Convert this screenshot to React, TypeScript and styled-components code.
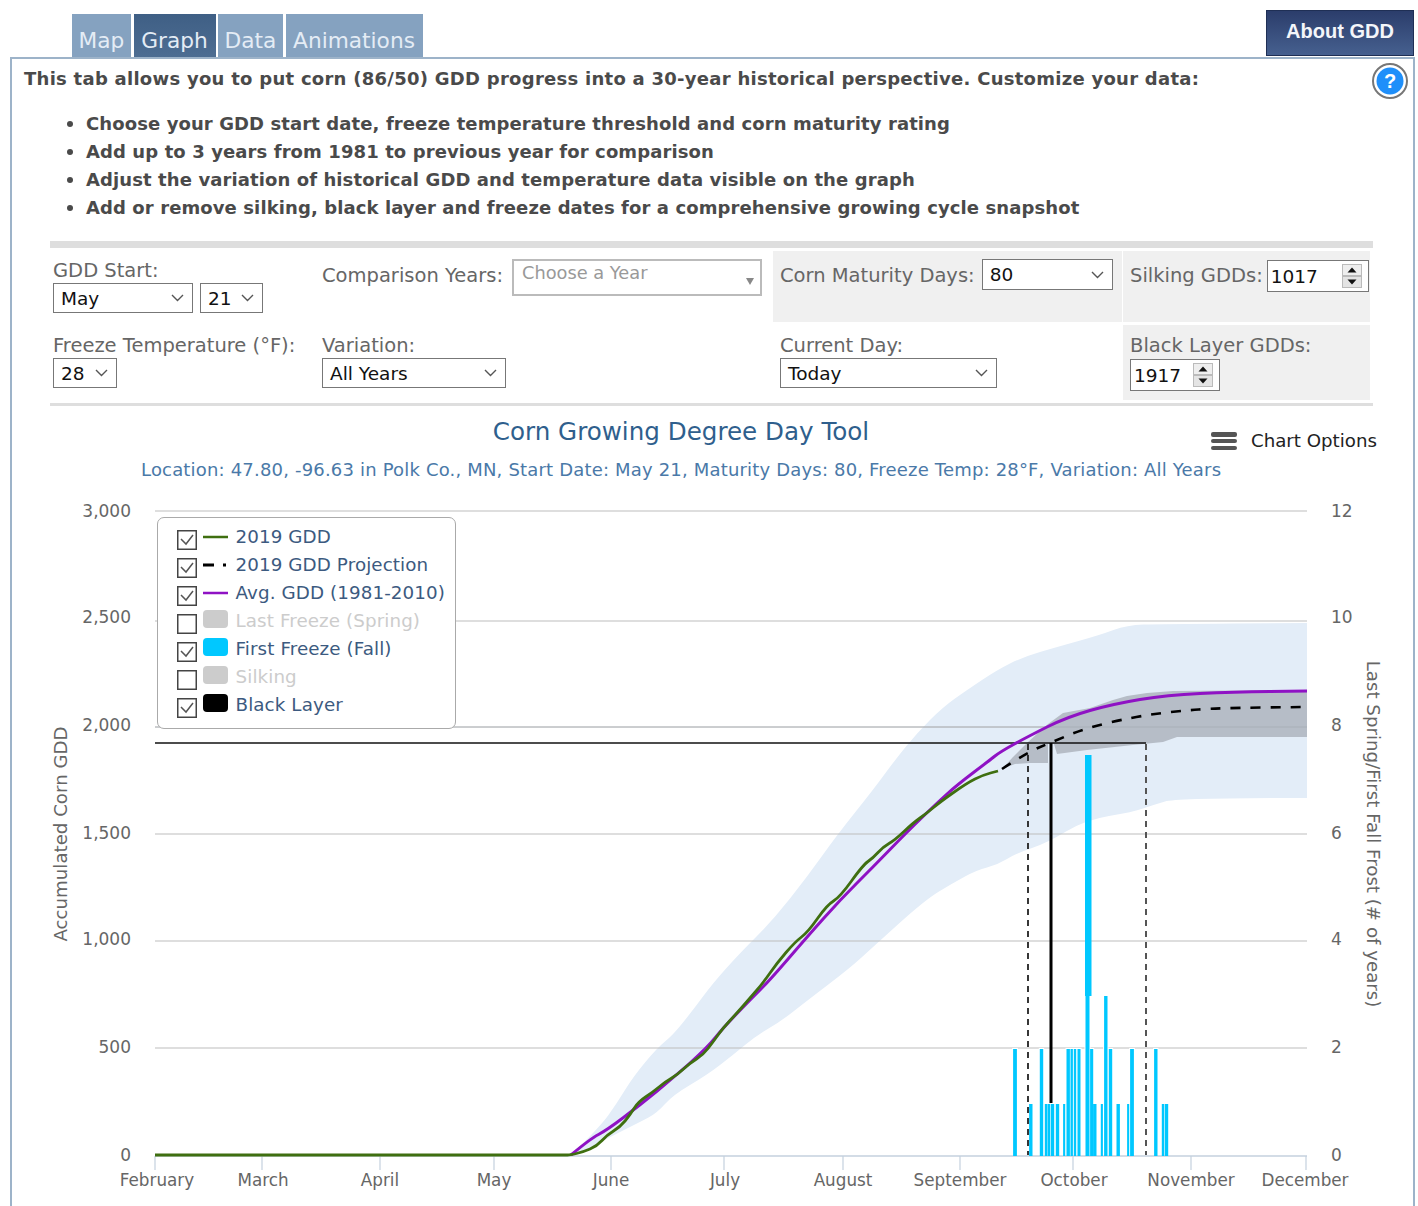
import React from "react";
import styled, { createGlobalStyle } from "styled-components";

const Global = createGlobalStyle`
  html, body { margin: 0; padding: 0; background: #fff; }
  body { width: 1418px; height: 1206px; overflow: hidden; font-family: "DejaVu Sans", Verdana, sans-serif; }
`;
const Page = styled.div`
  width: 1418px;
  height: 1206px;
  overflow: hidden;
`;
const TopBar = styled.div`
  height: 57px;
  padding: 10px 4px 0 72px;
  box-sizing: border-box;
  display: flex;
  justify-content: space-between;
  align-items: flex-end;
`;
const Tabs = styled.div`
  display: flex;
  gap: 2.5px;
`;
const Tab = styled.div<{ $active?: boolean; $w: number }>`
  width: ${(p) => p.$w}px;
  height: 43px;
  box-sizing: border-box;
  padding-top: 13px;
  text-align: center;
  font-size: 21.7px;
  line-height: 28px;
  color: #e4ecf5;
  background: ${(p) => (p.$active ? "linear-gradient(#3f5f85, #4d6d92)" : "#85a2c0")};
`;
const AboutButton = styled.div`
  width: 148px;
  height: 46px;
  margin-bottom: 1px;
  box-sizing: border-box;
  border: 1px solid #1f2f55;
  background: linear-gradient(#2b3d6b, #46608f);
  color: #f4f6fa;
  font: bold 20px/41px "Liberation Sans", Arial, sans-serif;
  text-align: center;
`;
const Panel = styled.div`
  position: relative;
  margin-left: 10px;
  width: 1405px;
  height: 1149px;
  box-sizing: border-box;
  border: 2px solid #9db3c9;
  border-bottom: 0;
  padding: 0 0 0 12px;
`;
const HelpIcon = styled.svg`
  position: absolute;
  top: 3px;
  right: 4px;
`;
const Intro = styled.div`
  font-size: 18px;
  font-weight: bold;
  letter-spacing: 0.27px;
  line-height: 28px;
  height: 28px;
  margin-top: 6px;
  color: #4a4a4a;
  white-space: nowrap;
`;
const BulletList = styled.ul`
  margin: 16px 0 0;
  padding: 0 0 0 62px;
  font-size: 18px;
  font-weight: bold;
  letter-spacing: 0.1px;
  line-height: 28px;
  color: #4a4a4a;
  list-style: disc;
  li { height: 28px; }
  li::marker { font-size: 19px; }
`;
const Rule = styled.div<{ $h: number; $top: number }>`
  width: 1323px;
  height: ${(p) => p.$h}px;
  margin: ${(p) => p.$top}px 0 0 26px;
  background: #dedede;
`;
const ControlGrid = styled.div`
  width: 1320px;
  margin: 3px 0 0 26px;
  display: grid;
  grid-template-columns: 268px 453px 349px 247px;
  column-gap: 1px;
  grid-template-rows: 71px 75px;
  row-gap: 3px;
`;
const Cell = styled.div<{ $shade?: boolean; $inset?: boolean; $top?: number }>`
  box-sizing: border-box;
  padding: ${(p) => p.$top ?? 8}px 0 0 ${(p) => (p.$inset ? 7 : 3)}px;
  background: ${(p) => (p.$shade ? "#f0f0f0" : "transparent")};
`;
const InlineCell = styled(Cell)<{ $gap?: number }>`
  display: flex;
  align-items: flex-start;
  gap: ${(p) => p.$gap ?? 7}px;
`;
const FieldLabel = styled.div`
  font-size: 19.5px;
  line-height: 24px;
  color: #666;
  white-space: nowrap;
`;
const InlineLabel = styled(FieldLabel)`
  margin-top: 5px;
`;
const Row = styled.div`
  display: flex;
  gap: 7px;
`;
const SelectBox = styled.div<{ $w: number; $h?: number }>`
  width: ${(p) => p.$w}px;
  height: ${(p) => p.$h ?? 30}px;
  box-sizing: border-box;
  border: 1.5px solid #777;
  background: #fff;
  display: flex;
  align-items: center;
  justify-content: space-between;
  padding: 0 8px 0 7px;
  font-size: 18.5px;
  color: #111;
`;
const Multi = styled.div`
  width: 250px;
  height: 37px;
  flex: none;
  box-sizing: border-box;
  border: 2px solid #bbb;
  background: #fff;
  display: flex;
  justify-content: space-between;
  padding: 0 6px 0 8px;
  font-size: 17.8px;
  line-height: 24px;
  color: #999;
`;
const Caret = styled.span`
  margin-top: 17px;
  width: 0;
  height: 0;
  border-left: 4px solid transparent;
  border-right: 4px solid transparent;
  border-top: 7px solid #888;
`;
const SpinInput = styled.div<{ $w: number }>`
  width: ${(p) => p.$w}px;
  height: 32px;
  flex: none;
  margin-top: 1px;
  box-sizing: border-box;
  border: 1.5px solid #777;
  background: #fff;
  display: flex;
  align-items: center;
  justify-content: space-between;
  padding: 0 6px 0 3px;
  font-size: 18.5px;
  color: #111;
`;
const Spin = styled.svg`
  flex: none;
`;
const ChartBlock = styled.div`
  position: relative;
  padding-top: 10px;
`;
const ChartTitle = styled.div`
  width: 1314px;
  text-align: center;
  font-size: 24.6px;
  line-height: 32px;
  color: #2f5f8d;
`;
const ChartSub = styled.div`
  margin: 10px 0 0 117px;
  font-size: 18px;
  letter-spacing: 0.18px;
  line-height: 24px;
  color: #4a79a8;
  white-space: nowrap;
`;
const ChartOptions = styled.div`
  position: absolute;
  top: 23px;
  left: 1187px;
  display: flex;
  align-items: center;
  gap: 14px;
  font: 18.2px/24px "DejaVu Sans", sans-serif;
  color: #222;
  white-space: nowrap;
`;
const Burger = styled.div`
  width: 26px;
  height: 18px;
  display: flex;
  flex-direction: column;
  justify-content: space-between;
  i { display: block; height: 4.5px; border-radius: 2px; background: #555; }
`;
const Plot = styled.svg`
  display: block;
  margin: 8px 0 0 0;
`;
const Legend = styled.div`
  position: absolute;
  left: 133px;
  top: 111px;
  width: 299px;
  height: 212px;
  box-sizing: border-box;
  border: 1.5px solid #aaa;
  border-radius: 7px;
  background: #fff;
  padding: 4.5px 0 0 18.5px;
`;
const LegendRow = styled.div<{ $off?: boolean }>`
  height: 28px;
  display: flex;
  align-items: center;
  font-size: 18.3px;
  letter-spacing: 0.1px;
  color: ${(p) => (p.$off ? "#ccc" : "#3c5a80")};
  white-space: nowrap;
`;
const Check = styled.svg`
  flex: none;
  margin: 6px 6px 0 0;
`;
const SwatchBox = styled.span<{ $c: string }>`
  flex: none;
  width: 25px;
  height: 18px;
  margin: -4px 8px 0 0;
  border-radius: 4px;
  background: ${(p) => p.$c};
`;
const SwatchLine = styled.svg`
  flex: none;
  margin-right: 8px;
`;

const Chevron = () => (
  <svg width="13" height="8" viewBox="0 0 13 8"><path d="M1 1l5.5 5.5L12 1" fill="none" stroke="#555" strokeWidth="1.4" /></svg>
);
const Spinner = () => (
  <Spin width="20" height="24" viewBox="0 0 20 24">
    <rect x="0.5" y="0.5" width="19" height="11" fill="#eee" stroke="#bbb" />
    <rect x="0.5" y="12.5" width="19" height="11" fill="#e4e4e4" stroke="#bbb" />
    <path d="M5.5 8.5l4.5-5 4.5 5z" fill="#111" />
    <path d="M5.5 15.5l4.5 5 4.5-5z" fill="#111" />
  </Spin>
);

const smooth = (p: number[][], move = true) => {
  let d = `${move ? "M" : "L"}${p[0][0]} ${p[0][1]}`;
  for (let i = 1; i < p.length - 1; i++) {
    const mx = (p[i][0] + p[i + 1][0]) / 2;
    const my = (p[i][1] + p[i + 1][1]) / 2;
    d += ` Q${p[i][0]} ${p[i][1]} ${mx} ${my}`;
  }
  const l = p[p.length - 1];
  return d + ` L${l[0]} ${l[1]}`;
};
const poly = (p: number[][]) => p.map((q, i) => `${i ? "L" : "M"}${q[0]} ${q[1]}`).join(" ") + " Z";

const purple = [[571,1155],[590,1139],[607,1130],[640,1105],[673,1078],[707,1048],[723,1028],[750,1000],[770,980],[807,937],[840,900],[873,867],[907,832],[937,803],[957,785],[990,760],[1000,752],[1027,737],[1067,717],[1113,704],[1167,695],[1233,692],[1307,691]];
const green = [[155,1155],[565,1155],[570,1155],[583,1152],[597,1146],[607,1135],[620,1127],[630,1115],[638,1102],[653,1092],[665,1082],[677,1075],[690,1063],[703,1055],[713,1042],[723,1028],[737,1013],[750,998],[763,983],[777,963],[795,942],[808,932],[827,905],[840,897],[863,865],[873,858],[883,847],[895,840],[913,823],[927,813],[940,802],[967,783],[983,775],[998,771]];
const proj = [[1002,769],[1028,752],[1050,743],[1083,729],[1133,717],[1177,711],[1220,708],[1307,707]];
const bandUp = [[571,1155],[600,1127],[617,1103],[633,1077],[657,1048],[673,1035],[693,1010],[713,983],[740,953],[773,920],[807,877],[837,835],[873,790],[895,760],[917,733],[943,707],[967,690],[997,670],[1023,657],[1057,647],[1100,635],[1127,625],[1160,624],[1307,623]];
const bandLow = [[1307,798],[1177,798],[1153,805],[1133,812],[1085,820],[1047,843],[1017,853],[997,865],[977,870],[953,883],[925,900],[873,947],[850,968],[808,1000],[780,1022],[757,1035],[733,1055],[707,1075],[673,1095],[657,1113],[640,1122],[610,1137],[590,1148],[571,1155]];
const darkA = [[1002,769],[1013,757],[1028,742],[1048,724],[1048,763],[1030,763],[1015,764]];
const darkB = [[1048,724],[1063,713],[1090,708],[1113,700],[1127,696],[1147,693],[1173,691],[1307,690],[1307,737],[1177,737],[1163,742],[1133,745],[1087,750],[1057,754],[1054,744],[1048,744]];

const bars: [number, number, number][] = [
  [1013.3,1016.7,2],[1029.3,1032.3,1],[1040,1043,2],[1045,1047.3,1],[1048,1050,1],[1051,1054,1],[1056,1059,1],[1063.3,1065,1],[1066.7,1069.7,2],[1070.7,1072.7,2],[1074,1076,2],[1077.7,1080.3,2],[1085.7,1089.3,3],[1090.3,1093,2],[1093.3,1096.3,1],[1101,1102.7,1],[1104.3,1107.3,3],[1109,1112,2],[1116.7,1119.7,1],[1127.3,1129,1],[1130.3,1133.7,2],[1154.3,1157.3,2],[1162,1164,1],[1165,1168,1],
];
const barTop = [0, 1104, 1049, 996];

const grid = [511, 621, 727, 834, 941, 1048];
const yLabels: [string, number, string][] = [["3,000",517,"12"],["2,500",623,"10"],["2,000",731,"8"],["1,500",839,"6"],["1,000",945,"4"],["500",1053,"2"],["0",1161,"0"]];
const ticks = [155, 262, 380, 494, 611, 724, 843, 960, 1073, 1191, 1306];
const months: [string, number][] = [["February",157],["March",263],["April",380],["May",494],["June",611],["July",725],["August",843],["September",960],["October",1074],["November",1191],["December",1305]];

const legendRows = [
  { label: "2019 GDD", kind: "line", c: "#3f6f10" },
  { label: "2019 GDD Projection", kind: "dash", c: "#000" },
  { label: "Avg. GDD (1981-2010)", kind: "line", c: "#8f12c4" },
  { label: "Last Freeze (Spring)", kind: "box", c: "#ccc", off: true },
  { label: "First Freeze (Fall)", kind: "box", c: "#00c8ff" },
  { label: "Silking", kind: "box", c: "#ccc", off: true },
  { label: "Black Layer", kind: "box", c: "#000" },
];

export default function App() {
  return (
    <Page>
      <Global />
      <TopBar>
        <Tabs>
          <Tab $w={59}>Map</Tab>
          <Tab $w={82} $active>Graph</Tab>
          <Tab $w={65}>Data</Tab>
          <Tab $w={137}>Animations</Tab>
        </Tabs>
        <AboutButton>About GDD</AboutButton>
      </TopBar>
      <Panel>
        <HelpIcon width="38" height="38" viewBox="0 0 38 38">
          <circle cx="19" cy="19" r="17" fill="#fff" stroke="#777" strokeWidth="2" />
          <circle cx="19" cy="19" r="13.5" fill="#1f8ffa" />
          <text x="19" y="26" textAnchor="middle" fontFamily="Liberation Sans" fontWeight="bold" fontSize="20" fill="#fff">?</text>
        </HelpIcon>
        <Intro>This tab allows you to put corn (86/50) GDD progress into a 30-year historical perspective. Customize your data:</Intro>
        <BulletList>
          <li>Choose your GDD start date, freeze temperature threshold and corn maturity rating</li>
          <li>Add up to 3 years from 1981 to previous year for comparison</li>
          <li>Adjust the variation of historical GDD and temperature data visible on the graph</li>
          <li>Add or remove silking, black layer and freeze dates for a comprehensive growing cycle snapshot</li>
        </BulletList>
        <Rule $h={7} $top={20} />
        <ControlGrid>
          <Cell>
            <FieldLabel>GDD Start:</FieldLabel>
            <Row>
              <SelectBox $w={140}>May<Chevron /></SelectBox>
              <SelectBox $w={63}>21<Chevron /></SelectBox>
            </Row>
          </Cell>
          <InlineCell $gap={9}>
            <InlineLabel>Comparison Years:</InlineLabel>
            <Multi>Choose a Year<Caret /></Multi>
          </InlineCell>
          <InlineCell $shade $inset>
            <InlineLabel>Corn Maturity Days:</InlineLabel>
            <SelectBox $w={131} $h={31}>80<Chevron /></SelectBox>
          </InlineCell>
          <InlineCell $shade $inset $gap={4}>
            <InlineLabel>Silking GDDs:</InlineLabel>
            <SpinInput $w={102}>1017<Spinner /></SpinInput>
          </InlineCell>
          <Cell $top={9}>
            <FieldLabel>Freeze Temperature (°F):</FieldLabel>
            <SelectBox $w={64}>28<Chevron /></SelectBox>
          </Cell>
          <Cell $top={9}>
            <FieldLabel>Variation:</FieldLabel>
            <SelectBox $w={184}>All Years<Chevron /></SelectBox>
          </Cell>
          <Cell $inset $top={9}>
            <FieldLabel>Current Day:</FieldLabel>
            <SelectBox $w={217}>Today<Chevron /></SelectBox>
          </Cell>
          <Cell $shade $inset $top={9}>
            <FieldLabel>Black Layer GDDs:</FieldLabel>
            <SpinInput $w={90}>1917<Spinner /></SpinInput>
          </Cell>
        </ControlGrid>
        <Rule $h={3} $top={3} />
        <ChartBlock>
          <ChartTitle>Corn Growing Degree Day Tool</ChartTitle>
          <ChartSub>Location: 47.80, -96.63 in Polk Co., MN, Start Date: May 21, Maturity Days: 80, Freeze Temp: 28°F, Variation: All Years</ChartSub>
          <ChartOptions><Burger><i /><i /><i /></Burger>Chart Options</ChartOptions>
          <Plot width="1380" height="716" viewBox="24 490 1380 716">
            <path d={smooth(bandUp) + " " + smooth(bandLow, false) + " Z"} fill="#e3edf8" />
            {grid.map((y) => (
              <line key={y} x1="155" x2="1307" y1={y} y2={y} stroke="#bbb" strokeOpacity="0.65" strokeWidth="1.5" />
            ))}
            <path d={poly(darkA)} fill="#b6bdc7" />
            <path d={poly(darkB)} fill="#b6bdc7" />
            <line x1="155" x2="1307" y1="727" y2="727" stroke="#a0a6ae" strokeOpacity="0.6" strokeWidth="1" />
            <line x1="155" x2="1307" y1="1156" y2="1156" stroke="#c4d0de" strokeWidth="1.5" />
            {ticks.map((x) => (
              <line key={x} x1={x} x2={x} y1="1156" y2="1170" stroke="#c4d0de" strokeWidth="1.2" />
            ))}
            {bars.map(([a, b, h]) => (
              <rect key={`h${a}`} x={a - 1.2} y={barTop[h] - 1} width={b - a + 2.4} height={1155 - barTop[h]} fill="#fff" />
            ))}
            <rect x="1085" y="755" width="6.5" height="241" fill="#00c8ff" />
            {bars.map(([a, b, h]) => (
              <rect key={a} x={a - 0.2} y={barTop[h]} width={b - a + 0.4} height={1156 - barTop[h]} fill="#00c8ff" />
            ))}
            <line x1="155" x2="1146" y1="743" y2="743" stroke="#111" strokeWidth="1.5" />
            <line x1="1028" x2="1028" y1="744" y2="1155" stroke="#222" strokeWidth="1.8" strokeDasharray="6 5" />
            <line x1="1146" x2="1146" y1="744" y2="1155" stroke="#555" strokeWidth="2" strokeDasharray="6 5" />
            <line x1="1051" x2="1051" y1="743" y2="1103" stroke="#000" strokeWidth="3" />
            <path d={smooth(purple)} fill="none" stroke="#8f12c4" strokeWidth="3" strokeLinejoin="round" />
            <path d={smooth(green)} fill="none" stroke="#3f6f10" strokeWidth="2.8" strokeLinejoin="round" />
            <path d={smooth(proj)} fill="none" stroke="#000" strokeWidth="2.6" strokeDasharray="10 10" />
            {yLabels.map(([l, y, r]) => (
              <React.Fragment key={l}>
                <text x="131" y={y} textAnchor="end" fontSize="17" fill="#666">{l}</text>
                <text x="1331" y={y} fontSize="17" fill="#666">{r}</text>
              </React.Fragment>
            ))}
            {months.map(([m, x]) => (
              <text key={m} x={x} y="1186" textAnchor="middle" fontSize="16.8" fill="#666">{m}</text>
            ))}
            <text transform="translate(67 834) rotate(-90)" textAnchor="middle" fontSize="18.2" fill="#666">Accumulated Corn GDD</text>
            <text transform="translate(1367 834) rotate(90)" textAnchor="middle" fontSize="18.2" fill="#666">Last Spring/First Fall Frost (# of years)</text>
          </Plot>
          <Legend>
            {legendRows.map((r) => (
              <LegendRow key={r.label} $off={r.off}>
                <Check width="20" height="20" viewBox="0 0 20 20">
                  <rect x="0.75" y="0.75" width="18.5" height="18.5" fill="#fff" stroke="#444" strokeWidth="1.5" />
                  {!r.off && <path d="M4 9l5 5 7-9" fill="none" stroke="#555" strokeWidth="1.5" />}
                </Check>
                {r.kind === "box" ? (
                  <SwatchBox $c={r.c} />
                ) : (
                  <SwatchLine width="25" height="4" viewBox="0 0 25 4">
                    {r.kind === "line" ? (
                      <rect y="0.75" width="25" height="2.5" fill={r.c} />
                    ) : (
                      <path d="M0 2h11M20 2h3" stroke={r.c} strokeWidth="2.8" />
                    )}
                  </SwatchLine>
                )}
                {r.label}
              </LegendRow>
            ))}
          </Legend>
        </ChartBlock>
      </Panel>
    </Page>
  );
}
